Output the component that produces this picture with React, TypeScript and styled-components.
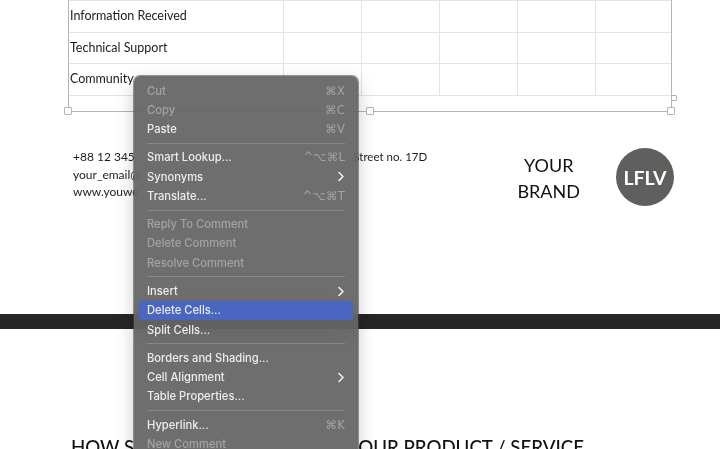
import React from "react";
import styled, { createGlobalStyle } from "styled-components";

const Global = createGlobalStyle`
  html, body { margin: 0; padding: 0; background: #fff; }
  body { width: 720px; height: 449px; overflow: hidden; font-family: "Lato", "Noto Sans", sans-serif; color: #1c1c1c; }
  #root { width: 720px; height: 449px; }
`;

const Page = styled.div`
  position: relative;
  width: 720px;
  height: 449px;
  overflow: hidden;
  filter: blur(0.35px);
`;

const TableFrame = styled.div`
  position: relative;
  box-sizing: border-box;
  margin-left: 68px;
  width: 604px;
  height: 112px;
  border: solid #b4b4b4;
  border-width: 0 1px 1px 1px;
`;

const Grid = styled.div`
  display: grid;
  grid-template-columns: 215px 78px 78px 78px 78px 1fr;
  grid-auto-rows: 31.5px;
  border-top: 1px solid #e4e4e4;
`;

const Cell = styled.div`
  box-sizing: border-box;
  display: flex;
  align-items: center;
  padding-left: 1px;
  padding-bottom: 1px;
  font-size: 12.5px;
  white-space: nowrap;
  border-bottom: 1px solid #e4e4e4;
  border-right: 1px solid #e4e4e4;
  &:nth-child(6n) { border-right: 0; }
`;

const Handle = styled.span<{ $x: number; $y: number; $small?: boolean }>`
  position: absolute;
  left: ${(p) => p.$x}px;
  top: ${(p) => p.$y}px;
  box-sizing: border-box;
  width: ${(p) => (p.$small ? 6 : 8)}px;
  height: ${(p) => (p.$small ? 6 : 8)}px;
  background: #fff;
  border: 1px solid #b4b4b4;
  border-radius: 1px;
`;

const Footer = styled.div`
  box-sizing: border-box;
  display: flex;
  height: 202px;
  padding: 36px 46px 0 73px;
`;

const Contact = styled.div`
  display: flex;
  flex-direction: column;
  font-size: 12px;
  line-height: 17.6px;
`;

const Address = styled.div`
  font-size: 11.5px;
  line-height: 17.6px;
  margin-left: 213px;
`;

const Brand = styled.div`
  display: flex;
  align-items: flex-start;
  gap: 36px;
  margin-left: auto;
`;

const BrandName = styled.div`
  padding-top: 4px;
  font-size: 18px;
  line-height: 26px;
  text-align: center;
  color: #111;
`;

const Logo = styled.div`
  width: 58px;
  height: 58px;
  border-radius: 50%;
  background: #5f5f5d;
  color: #fff;
  font-weight: 700;
  font-size: 19.5px;
  display: flex;
  align-items: center;
  justify-content: center;
`;

const Bar = styled.div`
  height: 15px;
  background: #262626;
`;

const Heading = styled.div`
  display: flex;
  margin-top: 106px;
  padding-left: 71px;
  font-size: 18.7px;
  line-height: 24px;
  color: #111;
  white-space: nowrap;
  font-weight: 500;
`;

const HeadingEnd = styled.span`
  margin-left: 224px;
`;

const Menu = styled.div`
  position: absolute;
  left: 134px;
  top: 76px;
  box-sizing: border-box;
  width: 224px;
  height: 420px;
  padding: 5px 5px;
  border-radius: 6px;
  background: rgba(102, 101, 101, 0.94);
  backdrop-filter: blur(14px);
  box-shadow: 0 0 0 1px rgba(70, 70, 70, 0.55), 0 6px 18px rgba(0, 0, 0, 0.22);
  font-family: "Inter", "DejaVu Sans", sans-serif;
  font-size: 11.2px;
  font-weight: 500;
`;

const Row = styled.div<{ $disabled?: boolean; $active?: boolean }>`
  display: flex;
  align-items: center;
  justify-content: space-between;
  height: 19.2px;
  padding: 0 8px;
  border-radius: 3px;
  white-space: nowrap;
  color: ${(p) => (p.$disabled ? "rgba(255,255,255,0.36)" : "rgba(255,255,255,0.88)")};
  background: ${(p) => (p.$active ? "#4a66c0" : "transparent")};
`;

const Shortcut = styled.span`
  color: rgba(255, 255, 255, 0.36);
  font-size: 11.5px;
  font-family: "DejaVu Sans", sans-serif;
  letter-spacing: 0.2px;
`;

const Arrow = styled.svg`
  width: 9px;
  height: 11px;
  fill: none;
  stroke: rgba(255, 255, 255, 0.9);
  stroke-width: 1.6;
  stroke-linecap: round;
  stroke-linejoin: round;
`;

const Separator = styled.div`
  height: 1px;
  margin: 4.2px 8px 4.1px;
  background: rgba(255, 255, 255, 0.17);
`;

type Item =
  | { sep: true }
  | { sep?: false; label: string; disabled?: boolean; active?: boolean; keys?: string; sub?: boolean };

const items: Item[] = [
  { label: "Cut", disabled: true, keys: "⌘X" },
  { label: "Copy", disabled: true, keys: "⌘C" },
  { label: "Paste", keys: "⌘V" },
  { sep: true },
  { label: "Smart Lookup...", keys: "^⌥⌘L" },
  { label: "Synonyms", sub: true },
  { label: "Translate...", keys: "^⌥⌘T" },
  { sep: true },
  { label: "Reply To Comment", disabled: true },
  { label: "Delete Comment", disabled: true },
  { label: "Resolve Comment", disabled: true },
  { sep: true },
  { label: "Insert", sub: true },
  { label: "Delete Cells...", active: true },
  { label: "Split Cells..." },
  { sep: true },
  { label: "Borders and Shading..." },
  { label: "Cell Alignment", sub: true },
  { label: "Table Properties..." },
  { sep: true },
  { label: "Hyperlink...", keys: "⌘K" },
  { label: "New Comment", disabled: true },
];

const rowLabels = ["Information Received", "Technical Support", "Community"];

export default function App() {
  return (
    <Page>
      <Global />
      <TableFrame>
        <Grid>
          {rowLabels.flatMap((label) => [
            <Cell key={label}>{label}</Cell>,
            ...[1, 2, 3, 4, 5].map((n) => <Cell key={label + n} />),
          ])}
        </Grid>
        <Handle $x={-5} $y={107} />
        <Handle $x={297} $y={107} />
        <Handle $x={598} $y={107} />
        <Handle $x={602} $y={95} $small />
      </TableFrame>
      <Footer>
        <Contact>
          <span>+88 12 345</span>
          <span>your_email@</span>
          <span>www.youwe</span>
        </Contact>
        <Address>Street no. 17D</Address>
        <Brand>
          <BrandName>
            YOUR
            <br />
            BRAND
          </BrandName>
          <Logo>LFLV</Logo>
        </Brand>
      </Footer>
      <Bar />
      <Heading>
        <span>HOW S</span>
        <HeadingEnd>OUR PRODUCT / SERVICE</HeadingEnd>
      </Heading>
      <Menu>
        {items.map((item, i) =>
          item.sep ? (
            <Separator key={i} />
          ) : (
            <Row key={i} $disabled={item.disabled} $active={item.active}>
              <span>{item.label}</span>
              {item.keys && <Shortcut>{item.keys}</Shortcut>}
              {item.sub && (
                <Arrow viewBox="0 0 9 11">
                  <path d="M3 1.5 L7 5.5 L3 9.5" />
                </Arrow>
              )}
            </Row>
          )
        )}
      </Menu>
    </Page>
  );
}
